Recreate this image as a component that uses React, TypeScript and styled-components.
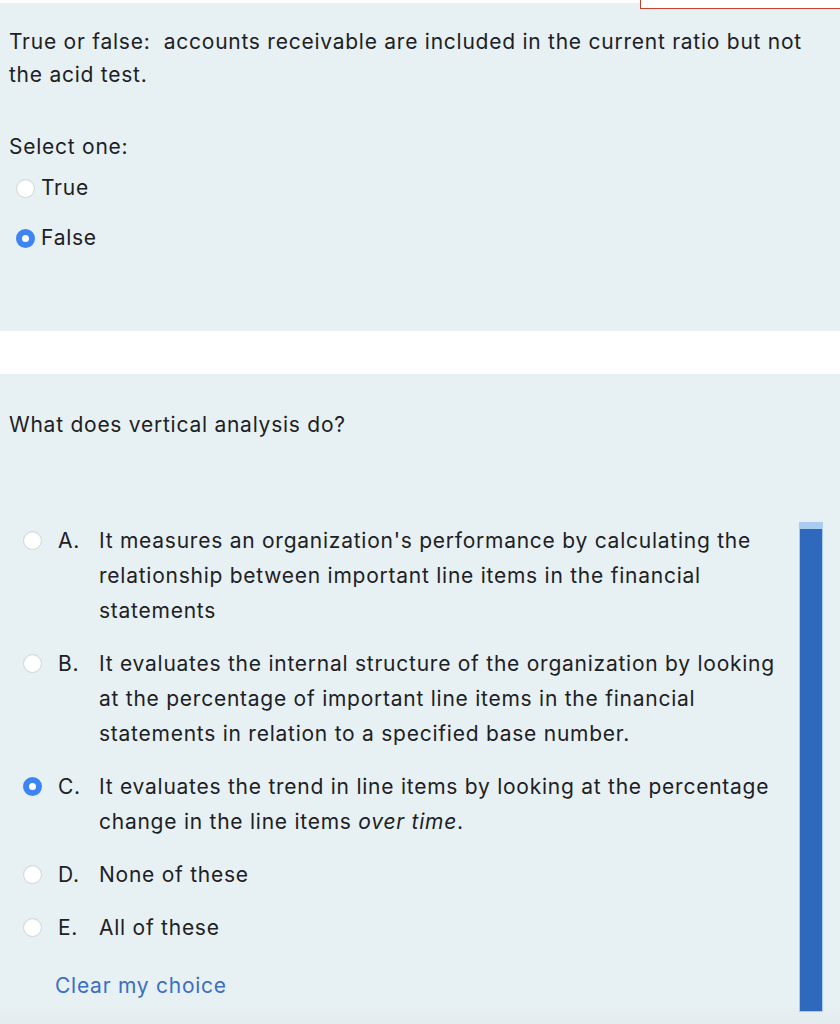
import styled, { createGlobalStyle } from 'styled-components';

const GlobalStyle = createGlobalStyle`
  body {
    margin: 0;
    background: #ffffff;
    font-family: Inter, "Liberation Sans", sans-serif;
    color: #1d2125;
    letter-spacing: 0.75px;
  }
`;

const answers = [
  {
    letter: 'A.',
    text: "It measures an organization's performance by calculating the relationship between important line items in the financial statements",
    checked: false,
  },
  {
    letter: 'B.',
    text: 'It evaluates the internal structure of the organization by looking at the percentage of important line items in the financial statements in relation to a specified base number.',
    checked: false,
  },
  {
    letter: 'C.',
    text: 'It evaluates the trend in line items by looking at the percentage change in the line items ',
    italic: 'over time',
    after: '.',
    checked: true,
  },
  { letter: 'D.', text: 'None of these', checked: false },
  { letter: 'E.', text: 'All of these', checked: false },
];

function App() {
  return (
    <Page>
      <GlobalStyle />
      <FlagBox />
      <Panel>
        <QuestionText>
          True or false:&nbsp; accounts receivable are included in the current ratio but not the acid test.
        </QuestionText>
        <Prompt>Select one:</Prompt>
        <TfList>
          <TfRow>
            <Radio checked={false} />
            <span>True</span>
          </TfRow>
          <TfRow>
            <Radio checked={true} />
            <span>False</span>
          </TfRow>
        </TfList>
      </Panel>
      <Gap />
      <Panel2>
        <QuestionText>What does vertical analysis do?</QuestionText>
        <AnswerArea>
          <AnswerList>
            {answers.map((a) => (
              <AnswerRow key={a.letter}>
                <RadioCell>
                  <Radio checked={a.checked} />
                </RadioCell>
                <Letter>{a.letter}</Letter>
                <AnswerText>
                  {a.text}
                  {a.italic && <Em>{a.italic}</Em>}
                  {a.after}
                </AnswerText>
              </AnswerRow>
            ))}
            <ClearLink>Clear my choice</ClearLink>
          </AnswerList>
          <SideBar />
        </AnswerArea>
      </Panel2>
    </Page>
  );
}

const Page = styled.div`
  position: relative;
  padding-top: 3px;
  width: 840px;
  height: 1024px;
  overflow: hidden;
`;

const FlagBox = styled.div`
  position: absolute;
  top: -2px;
  left: 640px;
  width: 210px;
  height: 9px;
  background: #ffffff;
  border: 1.5px solid #c8412f;
`;

const Panel = styled.div`
  background: #e7f0f3;
  height: 328px;
  box-sizing: border-box;
  padding: 22px 10px 0 9px;
`;

const Panel2 = styled(Panel)`
  height: auto;
  min-height: 660px;
  padding-top: 34px;
  padding-right: 0;
  background: linear-gradient(to bottom, #e7f0f3 0, #e7f0f3 630px, #e2eaed 660px);
`;

const Gap = styled.div`
  height: 43px;
`;

const QuestionText = styled.div`
  font-size: 21px;
  line-height: 33px;
`;

const Prompt = styled.div`
  font-size: 21px;
  line-height: 33px;
  margin-top: 39px;
`;

const TfList = styled.div`
  display: flex;
  flex-direction: column;
  gap: 20px;
  margin-top: 10px;
`;

const TfRow = styled.div`
  display: flex;
  align-items: center;
  gap: 6px;
  font-size: 21px;
  line-height: 30px;
  padding-left: 7px;
`;

const Radio = styled.span<{ checked: boolean }>`
  display: inline-block;
  box-sizing: border-box;
  width: 19px;
  height: 19px;
  border-radius: 50%;
  flex-shrink: 0;
  background: #ffffff;
  border: ${(p) => (p.checked ? '6.5px solid #3d84f5' : '1px solid #d2d6d9')};
  box-shadow: ${(p) => (p.checked ? 'none' : 'inset 0 1px 1px rgba(0,0,0,0.06)')};
`;

const AnswerArea = styled.div`
  display: flex;
  align-items: flex-start;
  margin-top: 82px;
`;

const AnswerList = styled.div`
  flex: 1;
  display: flex;
  flex-direction: column;
  gap: 18px;
`;

const AnswerRow = styled.div`
  display: flex;
  align-items: flex-start;
  font-size: 21px;
  line-height: 35px;
`;

const RadioCell = styled.div`
  width: 49px;
  height: 35px;
  display: flex;
  align-items: center;
  padding-left: 14px;
  box-sizing: border-box;
`;

const Letter = styled.div`
  width: 41px;
`;

const AnswerText = styled.div`
  flex: 1;
  padding-right: 12px;
`;

const Em = styled.em`
  font-style: italic;
`;

const ClearLink = styled.a`
  font-size: 21px;
  line-height: 35px;
  color: #3a6fc2;
  margin-left: 46px;
  margin-top: 5px;
  cursor: pointer;
`;

const SideBar = styled.div`
  width: 24px;
  height: 490px;
  margin: -1px 17px 0 0;
  box-sizing: border-box;
  background: #2f69bd;
  border: 1px solid #a9cbf0;
  border-top: 7px solid #a9cbf0;
  flex-shrink: 0;
`;

export default App;
